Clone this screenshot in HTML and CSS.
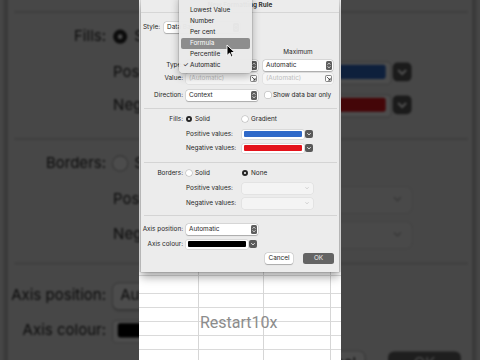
FILE: index.html
```html
<!DOCTYPE html>
<html lang="en">
<head>
  <meta charset="UTF-8">
  <meta name="viewport" content="width=device-width, initial-scale=1">
  <title>New Formatting Rule</title>
  <link rel="stylesheet" href="styles.css">
</head>
<body>
  <div class="backdrop"><div class="backdrop-inner" id="backdrop"></div></div>

  <div class="stage">
    <div class="phone" id="phone">
      <div class="dialog">
        <div class="title">New Formatting Rule</div>

        <div class="row r-style">
          <span class="lbl-s">Style:</span>
          <div class="popup w-style"><span>Data Bar</span>
            <svg class="stepper" viewBox="0 0 6 9"><rect width="6" height="9" rx="1.5" fill="#5f5f5f"/><path d="M1.6 3.6 3 2.2 4.4 3.6M1.6 5.4 3 6.8 4.4 5.4" fill="none" stroke="#fff" stroke-width=".8"/></svg>
          </div>
        </div>

        <div class="row r-head">
          <span class="lbl"></span>
          <span class="col-min head">Minimum</span>
          <span class="col-max head">Maximum</span>
        </div>

        <div class="row mt1">
          <span class="lbl">Type:</span>
          <div class="popup col-min"><span>Automatic</span>
            <svg class="stepper" viewBox="0 0 6 9"><rect width="6" height="9" rx="1.5" fill="#5f5f5f"/><path d="M1.6 3.6 3 2.2 4.4 3.6M1.6 5.4 3 6.8 4.4 5.4" fill="none" stroke="#fff" stroke-width=".8"/></svg>
          </div>
          <div class="popup col-max"><span>Automatic</span>
            <svg class="stepper" viewBox="0 0 6 9"><rect width="6" height="9" rx="1.5" fill="#5f5f5f"/><path d="M1.6 3.6 3 2.2 4.4 3.6M1.6 5.4 3 6.8 4.4 5.4" fill="none" stroke="#fff" stroke-width=".8"/></svg>
          </div>
        </div>

        <div class="row mt1">
          <span class="lbl">Value:</span>
          <div class="field col-min"><span>(Automatic)</span>
            <svg class="pick" viewBox="0 0 7 7"><rect x=".5" y=".5" width="6" height="6" rx="1" fill="#fff" stroke="#555" stroke-width=".7"/><path d="M1.8 1.8 4.6 4.6" stroke="#333" stroke-width=".8"/><path d="M5.5 2.8V5.5H2.8Z" fill="#333"/></svg>
          </div>
          <div class="field col-max"><span>(Automatic)</span>
            <svg class="pick" viewBox="0 0 7 7"><rect x=".5" y=".5" width="6" height="6" rx="1" fill="#fff" stroke="#555" stroke-width=".7"/><path d="M1.8 1.8 4.6 4.6" stroke="#333" stroke-width=".8"/><path d="M5.5 2.8V5.5H2.8Z" fill="#333"/></svg>
          </div>
        </div>

        <div class="row mt5">
          <span class="lbl">Direction:</span>
          <div class="popup col-min"><span>Context</span>
            <svg class="stepper" viewBox="0 0 6 9"><rect width="6" height="9" rx="1.5" fill="#5f5f5f"/><path d="M1.6 3.6 3 2.2 4.4 3.6M1.6 5.4 3 6.8 4.4 5.4" fill="none" stroke="#fff" stroke-width=".8"/></svg>
          </div>
          <label class="check"><span class="box"></span>Show data bar only</label>
        </div>

        <div class="sep mt7"></div>

        <div class="row mt4">
          <span class="lbl">Fills:</span>
          <span class="opt first"><span class="radio on"></span>Solid</span>
          <span class="opt"><span class="radio"></span>Gradient</span>
        </div>
        <div class="row mt3">
          <span class="lbl"></span>
          <span class="sub">Positive values:</span>
          <div class="swatch">
            <span class="swatch-box"><span class="swatch-bar blue"></span></span>
            <span class="drop"><svg viewBox="0 0 8 8"><path d="M2.3 3.2 4 4.9 5.7 3.2" fill="none" stroke="#fff" stroke-width=".9"/></svg></span>
          </div>
        </div>
        <div class="row mt2">
          <span class="lbl"></span>
          <span class="sub">Negative values:</span>
          <div class="swatch">
            <span class="swatch-box"><span class="swatch-bar red"></span></span>
            <span class="drop"><svg viewBox="0 0 8 8"><path d="M2.3 3.2 4 4.9 5.7 3.2" fill="none" stroke="#fff" stroke-width=".9"/></svg></span>
          </div>
        </div>

        <div class="sep mt8"></div>

        <div class="row mt4">
          <span class="lbl">Borders:</span>
          <span class="opt first"><span class="radio"></span>Solid</span>
          <span class="opt"><span class="radio on"></span>None</span>
        </div>
        <div class="row mt3">
          <span class="lbl"></span>
          <span class="sub">Positive values:</span>
          <div class="popup off wide"><span></span>
            <svg class="chev" viewBox="0 0 6 6"><path d="M1.5 2.3 3 3.8 4.5 2.3" fill="none" stroke="#c2c2c2" stroke-width=".8"/></svg>
          </div>
        </div>
        <div class="row mt3">
          <span class="lbl"></span>
          <span class="sub">Negative values:</span>
          <div class="popup off wide"><span></span>
            <svg class="chev" viewBox="0 0 6 6"><path d="M1.5 2.3 3 3.8 4.5 2.3" fill="none" stroke="#c2c2c2" stroke-width=".8"/></svg>
          </div>
        </div>

        <div class="sep mt6"></div>

        <div class="row mt7">
          <span class="lbl">Axis position:</span>
          <div class="popup col-min"><span>Automatic</span>
            <svg class="stepper" viewBox="0 0 6 9"><rect width="6" height="9" rx="1.5" fill="#5f5f5f"/><path d="M1.6 3.6 3 2.2 4.4 3.6M1.6 5.4 3 6.8 4.4 5.4" fill="none" stroke="#fff" stroke-width=".8"/></svg>
          </div>
        </div>
        <div class="row mt3">
          <span class="lbl">Axis colour:</span>
          <div class="swatch">
            <span class="swatch-box"><span class="swatch-bar black"></span></span>
            <span class="drop"><svg viewBox="0 0 8 8"><path d="M2.3 3.2 4 4.9 5.7 3.2" fill="none" stroke="#fff" stroke-width=".9"/></svg></span>
          </div>
        </div>

        <div class="row actions mt2">
          <button class="btn cancel">Cancel</button>
          <button class="btn ok">OK</button>
        </div>
      </div>

      <div class="sheet"></div>
      <div class="mark">Restart10x</div>

      <div class="menu">
        <div class="item">Lowest Value</div>
        <div class="item">Number</div>
        <div class="item">Per cent</div>
        <div class="item hl">Formula</div>
        <div class="item">Percentile</div>
        <div class="item"><span class="tick">✓</span>Automatic</div>
      </div>
      <svg class="cursor" viewBox="0 0 10 14"><path d="M1 1V11.5L3.6 9.1 5.4 13 7 12.3 5.3 8.5H8.8Z" fill="#000" stroke="#fff" stroke-width=".9" stroke-linejoin="round"/></svg>
    </div>
  </div>

  <script src="script.js"></script>
</body>
</html>
```

FILE: styles.css
```css
* {
  box-sizing: border-box;
}
body {
  margin: 0;
  width: 480px;
  height: 360px;
  overflow: hidden;
  background: #474747;
  font-family: 'Inter', 'Liberation Sans', sans-serif;
}

/* zoomed, dimmed copy of the phone filling the sides */
.backdrop {
  position: fixed;
  inset: 0;
  filter: blur(1.2px) brightness(0.3);
}
.backdrop-inner {
  position: absolute;
  left: 139px;
  top: 0;
  width: 202px;
  height: 360px;
  transform: scale(2.35);
}

.stage {
  position: relative;
  display: flex;
  justify-content: center;
  height: 360px;
}
.phone {
  position: relative;
  width: 202px;
  height: 360px;
  background: #f0f0f0;
  display: flex;
  flex-direction: column;
  overflow: hidden;
  font-size: 6.4px;
  color: #262626;
}

.dialog {
  position: relative;
  z-index: 1;
  margin: 0 2px;
  padding-bottom: 8px;
  background: #ececec;
  box-shadow: 0 0 0 0.5px rgba(0,0,0,0.18), 0 5px 9px rgba(0,0,0,0.35);
  display: flex;
  flex-direction: column;
}
.title {
  height: 13px;
  line-height: 11px;
  text-align: center;
  font-weight: 700;
  color: #333;
  border-bottom: 1px solid #d6d6d6;
  flex-shrink: 0;
}

.row {
  display: flex;
  align-items: center;
  height: 12px;
  flex-shrink: 0;
  white-space: nowrap;
}
.mt1 { margin-top: 1px; }
.mt2 { margin-top: 2px; }
.mt3 { margin-top: 3px; }
.mt4 { margin-top: 4px; }
.mt5 { margin-top: 5px; }
.mt6 { margin-top: 6px; }
.mt7 { margin-top: 7px; }
.mt8 { margin-top: 8px; }

.r-style {
  margin-top: 8px;
  padding-left: 2px;
}
.lbl-s {
  margin-right: 4px;
}
.w-style {
  width: 76px;
}
.r-head {
  margin-top: 13px;
}
.head {
  text-align: center;
  color: #2a2a2a;
}

.lbl {
  width: 42px;
  margin-right: 3px;
  text-align: right;
}
.col-min {
  width: 72px;
}
.col-max {
  width: 70px;
  margin-left: 5px;
}

.popup,
.field {
  height: 11px;
  border-radius: 2.5px;
  display: flex;
  align-items: center;
  justify-content: space-between;
  padding: 0 1px 0 3px;
}
.popup {
  background: #fff;
  box-shadow: 0 0 0 0.5px rgba(0,0,0,0.14), 0 0.5px 1px rgba(0,0,0,0.22);
}
.popup.off {
  background: #f4f4f4;
  box-shadow: 0 0 0 0.5px rgba(0,0,0,0.07);
  padding-right: 3px;
}
.popup.wide {
  width: 71px;
}
.field {
  background: #f6f6f6;
  color: #bdbdbd;
  box-shadow: 0 0 0 0.5px rgba(0,0,0,0.08);
}
.stepper {
  width: 6px;
  height: 9px;
}
.pick {
  width: 7px;
  height: 7px;
}
.chev {
  width: 6px;
  height: 6px;
}

.check {
  display: flex;
  align-items: center;
  gap: 2px;
  margin-left: 7px;
}
.box {
  width: 6px;
  height: 6px;
  background: #fff;
  border-radius: 1.5px;
  box-shadow: 0 0 0 0.5px rgba(0,0,0,0.25);
}

.sep {
  height: 1px;
  margin-left: 3px;
  margin-right: 2px;
  background: #d4d4d4;
  flex-shrink: 0;
}

.opt {
  display: flex;
  align-items: center;
  gap: 3px;
}
.opt.first {
  width: 56px;
}
.radio {
  width: 6px;
  height: 6px;
  border-radius: 50%;
  background: #fff;
  box-shadow: 0 0 0 0.5px rgba(0,0,0,0.25);
}
.radio.on {
  border: 2px solid #262626;
  box-shadow: none;
}

.sub {
  width: 56px;
}
.swatch {
  display: flex;
  align-items: center;
  gap: 1px;
}
.swatch-box {
  width: 62px;
  height: 9px;
  padding: 1.5px 2px;
  background: #fff;
  border-radius: 1.5px;
  box-shadow: 0 0 0 0.5px rgba(0,0,0,0.15);
}
.swatch-bar {
  display: block;
  height: 100%;
  border-radius: 1px;
}
.blue { background: #2f69c9; }
.red { background: #e4131b; }
.black { background: #000; }
.drop {
  width: 8px;
  height: 8px;
  background: #595959;
  border-radius: 2px;
  display: flex;
}
.drop svg {
  width: 8px;
  height: 8px;
}

.actions {
  justify-content: flex-end;
  gap: 10px;
  padding-right: 5px;
}
.btn {
  height: 11px;
  padding: 0;
  border: none;
  border-radius: 2.5px;
  font: inherit;
  display: flex;
  align-items: center;
  justify-content: center;
}
.cancel {
  width: 28px;
  background: #fff;
  color: #262626;
  box-shadow: 0 0 0 0.5px rgba(0,0,0,0.14), 0 0.5px 1px rgba(0,0,0,0.22);
}
.ok {
  width: 31px;
  background: #646464;
  color: #efefef;
}

.sheet {
  flex: 1;
  background:
    linear-gradient(#d6d6d6, #d6d6d6) 59px 0 / 1px 100% no-repeat,
    linear-gradient(#d6d6d6, #d6d6d6) 124px 0 / 1px 100% no-repeat,
    linear-gradient(#d6d6d6, #d6d6d6) 191px 0 / 1px 100% no-repeat,
    repeating-linear-gradient(to bottom, transparent 0 13px, #dadada 13px 14px) 0 8px,
    #fff;
}
.mark {
  position: absolute;
  left: 61px;
  top: 313px;
  font-family: 'Roboto', sans-serif;
  font-size: 16px;
  color: #8c8c8c;
  z-index: 2;
}

.menu {
  position: absolute;
  left: 40px;
  top: -5px;
  width: 73px;
  padding: 10px 2px 2px;
  background: rgba(233,233,233,0.97);
  border-radius: 4px;
  box-shadow: 0 0 0 0.5px rgba(0,0,0,0.18), 0 3px 8px rgba(0,0,0,0.3);
  z-index: 3;
}
.item {
  position: relative;
  height: 11px;
  line-height: 11px;
  padding-left: 9px;
  border-radius: 2px;
  color: #222;
}
.item.hl {
  background: #8d8d8d;
  color: #fff;
}
.tick {
  position: absolute;
  left: 2px;
}
.cursor {
  position: absolute;
  left: 87px;
  top: 44px;
  width: 10px;
  height: 14px;
  z-index: 4;
}
```

FILE: script.js
```js
// side fill: a zoomed copy of the phone, blurred and dimmed by the css
const phone = document.getElementById('phone');
const copy = phone.cloneNode(true);
copy.removeAttribute('id');
copy.setAttribute('aria-hidden', 'true');
document.getElementById('backdrop').appendChild(copy);
```
